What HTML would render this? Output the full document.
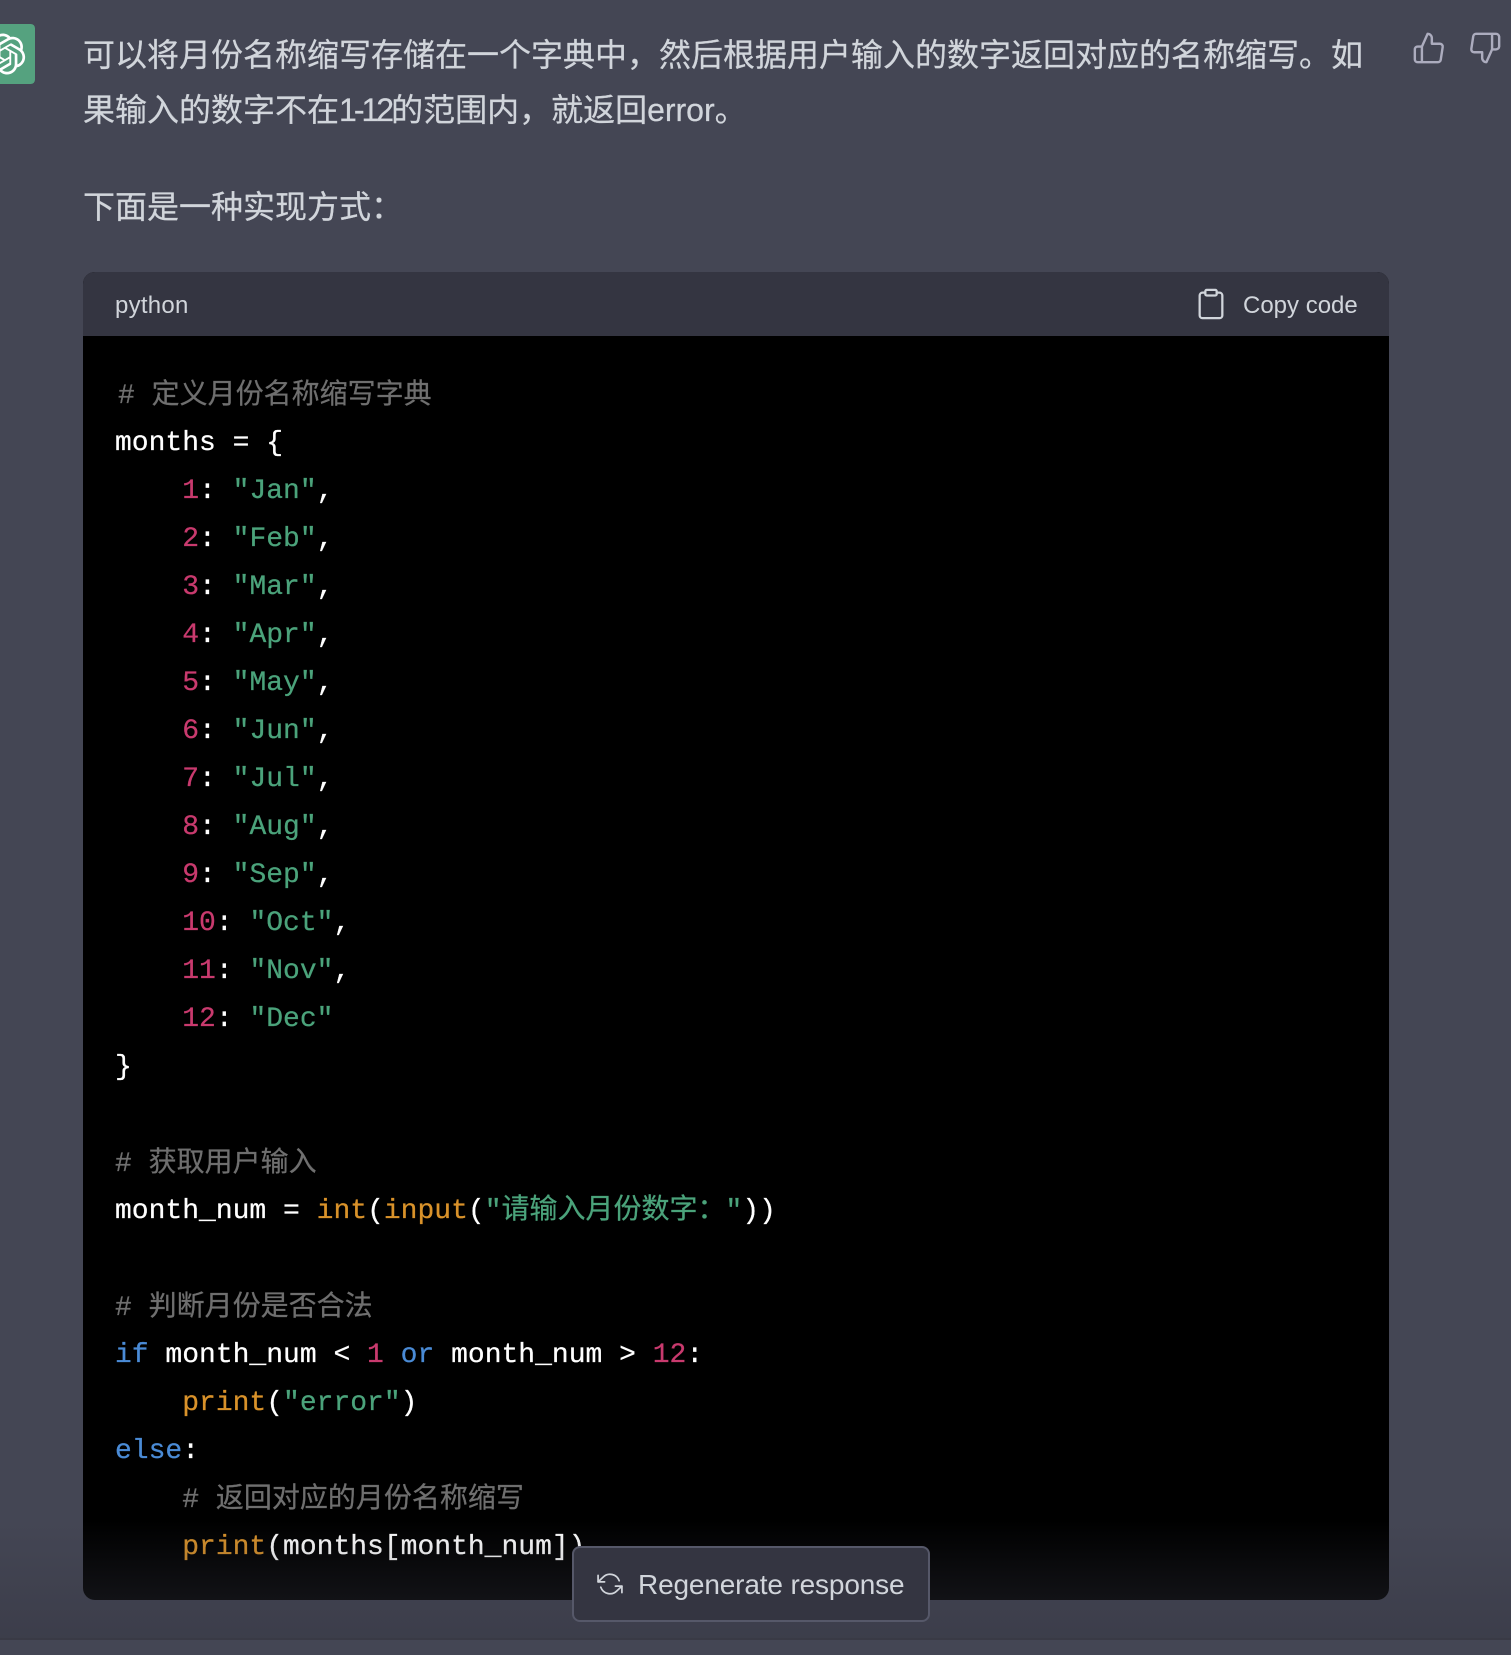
<!DOCTYPE html>
<html lang="zh">
<head>
<meta charset="utf-8">
<title>Chat</title>
<style>
html,body{margin:0;padding:0;width:1511px;height:1655px;overflow:hidden;background:#444654}
body{position:relative;font-family:"Liberation Sans","Noto Sans CJK SC",sans-serif}
.abs{position:absolute}
.p{position:absolute;left:83px;white-space:nowrap;font-size:32px;line-height:56px;color:#d1d5db;-webkit-text-stroke:.25px #d1d5db}
.block{position:absolute;left:83px;top:272px;width:1306px;height:1328px;border-radius:12px;background:#000;overflow:hidden}
.head{position:absolute;left:0;top:0;width:100%;height:64px;background:#343541}
.head span{position:absolute;top:2px;line-height:64px;font-size:24px;color:#d1d5db}
pre{position:absolute;left:115px;top:372px;margin:0;font-family:"Liberation Mono","Noto Sans CJK SC",monospace;font-size:28px;line-height:48px;color:#fff;-webkit-text-stroke:.25px}
.c{color:#6f6f6f;position:relative;top:1px}.n{color:#c93a6e}.s{color:#4ba37b}.k{color:#4a8bd6}.b{color:#d9922a}
.fade{position:absolute;left:0;top:1520px;width:1511px;height:118px;background:linear-gradient(to bottom,rgba(52,53,65,0),rgba(52,53,65,.5))}
.line{position:absolute;left:0;top:1638px;width:1511px;height:2px;background:#393a45}
.btn{position:absolute;left:572px;top:1546px;width:358px;height:76px;box-sizing:border-box;border:2px solid #565869;border-radius:8px;background:#343541}
.btn span{position:absolute;left:64px;top:1px;line-height:72px;font-size:28px;color:#d1d5db;white-space:nowrap;letter-spacing:-.15px}
</style>
</head>
<body>
<svg class="abs" style="left:-25px;top:24px;border-radius:4px" width="60" height="60" viewBox="0 0 60 60"><rect width="60" height="60" rx="4" fill="#55a27f"/><svg x="9" y="9" width="42" height="42" viewBox="0 0 41 41"><path fill="#fff" d="M37.5324 16.8707C37.9808 15.5241 38.1363 14.0974 37.9886 12.6859C37.8409 11.2744 37.3934 9.91076 36.676 8.68622C35.6126 6.83404 33.9882 5.3676 32.0373 4.4985C30.0864 3.62941 27.9098 3.40259 25.8215 3.85078C24.8796 2.7893 23.7219 1.94125 22.4257 1.36341C21.1295 0.785575 19.7249 0.491269 18.3058 0.500197C16.1708 0.495044 14.0893 1.16803 12.3614 2.42214C10.6335 3.67624 9.34853 5.44666 8.6917 7.47815C7.30085 7.76286 5.98686 8.3414 4.8377 9.17505C3.68854 10.0087 2.73073 11.0782 2.02839 12.312C0.956464 14.1591 0.498905 16.2988 0.721698 18.4228C0.944492 20.5467 1.83612 22.5449 3.268 24.1293C2.81966 25.4759 2.66413 26.9026 2.81182 28.3141C2.95951 29.7256 3.40701 31.0892 4.12437 32.3138C5.18791 34.1659 6.8123 35.6322 8.76321 36.5013C10.7141 37.3704 12.8907 37.5973 14.979 37.1492C15.9208 38.2107 17.0786 39.0587 18.3747 39.6366C19.6709 40.2144 21.0755 40.5087 22.4946 40.4998C24.6307 40.5054 26.7133 39.8321 28.4418 38.5772C30.1704 37.3223 31.4556 35.5506 32.1119 33.5179C33.5027 33.2332 34.8167 32.6547 35.9659 31.821C37.115 30.9874 38.0728 29.9178 38.7752 28.684C39.8458 26.8371 40.3023 24.6979 40.0789 22.5748C39.8556 20.4517 38.9639 18.4544 37.5324 16.8707ZM22.4978 37.8849C20.7443 37.8874 19.0459 37.2733 17.6994 36.1501C17.7601 36.117 17.8666 36.0586 17.936 36.0161L25.9004 31.4156C26.1003 31.3019 26.2663 31.137 26.3813 30.9378C26.4964 30.7386 26.5563 30.5124 26.5549 30.2825V19.0542L29.9213 20.998C29.9389 21.0068 29.9541 21.0198 29.9656 21.0359C29.977 21.052 29.9842 21.0707 29.9867 21.0902V30.3889C29.9842 32.375 29.1946 34.2791 27.7909 35.6841C26.3872 37.0892 24.4838 37.8806 22.4978 37.8849ZM6.39227 31.0064C5.51397 29.4888 5.19742 27.7107 5.49804 25.9832C5.55718 26.0187 5.66048 26.0818 5.73461 26.1244L13.699 30.7248C13.8975 30.8408 14.1233 30.902 14.3532 30.902C14.583 30.902 14.8088 30.8408 15.0073 30.7248L24.731 25.1103V28.9979C24.7321 29.0177 24.7283 29.0376 24.7199 29.0556C24.7115 29.0736 24.6988 29.0893 24.6829 29.1012L16.6317 33.7497C14.9096 34.7416 12.8643 35.0097 10.9447 34.4954C9.02506 33.9811 7.38785 32.7263 6.39227 31.0064ZM4.29707 13.6194C5.17156 12.0998 6.55279 10.9364 8.19885 10.3327C8.19885 10.4013 8.19491 10.5228 8.19491 10.6071V19.808C8.19351 20.0378 8.25334 20.2638 8.36823 20.4629C8.48312 20.6619 8.64893 20.8267 8.84863 20.9404L18.5723 26.5542L15.206 28.4979C15.1894 28.5089 15.1703 28.5155 15.1505 28.5173C15.1307 28.5191 15.1107 28.516 15.0924 28.5082L7.04046 23.8557C5.32135 22.8601 4.06716 21.2235 3.55289 19.3046C3.03862 17.3858 3.30624 15.3413 4.29707 13.6194ZM31.955 20.0556L22.2312 14.4411L25.5976 12.4981C25.6142 12.4872 25.6333 12.4805 25.6531 12.4787C25.6729 12.4769 25.6928 12.4801 25.7111 12.4879L33.7631 17.1364C34.9967 17.849 36.0017 18.8982 36.6606 20.1613C37.3194 21.4244 37.6047 22.849 37.4832 24.2684C37.3617 25.6878 36.8382 27.0432 35.9743 28.1759C35.1103 29.3086 33.9415 30.1717 32.6047 30.6641C32.6047 30.5947 32.6047 30.4733 32.6047 30.3889V21.188C32.6066 20.9586 32.5474 20.7328 32.4332 20.5338C32.319 20.3348 32.154 20.1698 31.955 20.0556ZM35.3055 15.0128C35.2464 14.9765 35.1431 14.9142 35.069 14.8717L27.1045 10.2712C26.906 10.1554 26.6803 10.0943 26.4504 10.0943C26.2206 10.0943 25.9948 10.1554 25.7963 10.2712L16.0726 15.8858V11.9982C16.0715 11.9783 16.0753 11.9585 16.0837 11.9405C16.0921 11.9225 16.1048 11.9068 16.1207 11.8949L24.1719 7.25025C25.4053 6.53903 26.8158 6.19376 28.2383 6.25482C29.6608 6.31589 31.0364 6.78077 32.2044 7.59508C33.3723 8.40939 34.2842 9.53945 34.8334 10.8531C35.3826 12.1667 35.5464 13.6095 35.3055 15.0128ZM14.2424 21.9419L10.8752 19.9981C10.8576 19.9893 10.8423 19.9763 10.8309 19.9602C10.8195 19.9441 10.8122 19.9254 10.8098 19.9058V10.6071C10.8107 9.18295 11.2173 7.78848 11.9819 6.58696C12.7466 5.38544 13.8377 4.42659 15.1275 3.82264C16.4173 3.21869 17.8524 2.99464 19.2649 3.1767C20.6775 3.35876 22.0089 3.93941 23.1034 4.85067C23.0427 4.88379 22.937 4.94215 22.8668 4.98473L14.9024 9.58517C14.7025 9.69878 14.5366 9.86356 14.4215 10.0626C14.3065 10.2616 14.2466 10.4877 14.2479 10.7175L14.2424 21.9419ZM16.071 17.9991L20.4018 15.4978L24.7325 17.9975V22.9985L20.4018 25.4983L16.071 22.9985V17.9991Z"/></svg></svg>

<div class="p" style="top:27px">可以将月份名称缩写存储在一个字典中，然后根据用户输入的数字返回对应的名称缩写。如</div>
<div class="p" style="top:82px">果输入的数字不在<span style="letter-spacing:-3px">1-12</span>的范围内，就返回error。</div>
<div class="p" style="top:179px">下面是一种实现方式：</div>

<svg class="abs" style="left:1412px;top:31px" width="34" height="34" viewBox="0 0 24 24" fill="none" stroke="#acacbe" stroke-width="1.7" stroke-linecap="round" stroke-linejoin="round"><path d="M14 9V5a3 3 0 0 0-3-3l-4 9v11h11.28a2 2 0 0 0 2-1.7l1.38-9a2 2 0 0 0-2-2.3zM7 22H4a2 2 0 0 1-2-2v-7a2 2 0 0 1 2-2h3"/></svg>
<svg class="abs" style="left:1468px;top:31px" width="34" height="34" viewBox="0 0 24 24" fill="none" stroke="#acacbe" stroke-width="1.7" stroke-linecap="round" stroke-linejoin="round"><path d="M10 15v4a3 3 0 0 0 3 3l4-9V2H5.72a2 2 0 0 0-2 1.7l-1.38 9a2 2 0 0 0 2 2.3zm7-13h2.67A2.31 2.31 0 0 1 22 4v7a2.31 2.31 0 0 1-2.33 2H17"/></svg>

<div class="block">
  <div class="head">
    <span style="left:32px;letter-spacing:.25px">python</span>
    <svg class="abs" style="left:1111px;top:15px" width="34" height="34" viewBox="0 0 24 24" fill="none" stroke="#d1d5db" stroke-width="1.6" stroke-linecap="round" stroke-linejoin="round"><path d="M16 4h2a2 2 0 0 1 2 2v14a2 2 0 0 1-2 2H6a2 2 0 0 1-2-2V6a2 2 0 0 1 2-2h2"/><rect x="8" y="2" width="8" height="4" rx="1"/></svg>
    <span style="left:1160px">Copy code</span>
  </div>
</div>

<pre><span class="c" style="margin-left:3px"># 定义月份名称缩写字典</span>
months = {
    <span class="n">1</span>: <span class="s">"Jan"</span>,
    <span class="n">2</span>: <span class="s">"Feb"</span>,
    <span class="n">3</span>: <span class="s">"Mar"</span>,
    <span class="n">4</span>: <span class="s">"Apr"</span>,
    <span class="n">5</span>: <span class="s">"May"</span>,
    <span class="n">6</span>: <span class="s">"Jun"</span>,
    <span class="n">7</span>: <span class="s">"Jul"</span>,
    <span class="n">8</span>: <span class="s">"Aug"</span>,
    <span class="n">9</span>: <span class="s">"Sep"</span>,
    <span class="n">10</span>: <span class="s">"Oct"</span>,
    <span class="n">11</span>: <span class="s">"Nov"</span>,
    <span class="n">12</span>: <span class="s">"Dec"</span>
}

<span class="c"># 获取用户输入</span>
month_num = <span class="b">int</span>(<span class="b">input</span>(<span class="s">"请输入月份数字："</span>))

<span class="c"># 判断月份是否合法</span>
<span class="k">if</span> month_num &lt; <span class="n">1</span> <span class="k">or</span> month_num &gt; <span class="n">12</span>:
    <span class="b">print</span>(<span class="s">"error"</span>)
<span class="k">else</span>:
    <span class="c"># 返回对应的月份名称缩写</span>
    <span class="b">print</span>(months[month_num])</pre>

<div class="fade"></div>
<div class="line"></div>

<div class="btn">
  <svg class="abs" style="left:23px;top:23px" width="26" height="26" viewBox="0 0 24 24" fill="none" stroke="#d1d5db" stroke-width="1.6" stroke-linecap="round" stroke-linejoin="round"><polyline points="1 4 1 10 7 10"/><polyline points="23 20 23 14 17 14"/><path d="M20.49 9A9 9 0 0 0 5.64 5.64L1 10m22 4l-4.64 4.36A9 9 0 0 1 3.51 15"/></svg>
  <span>Regenerate response</span>
</div>
</body>
</html>
